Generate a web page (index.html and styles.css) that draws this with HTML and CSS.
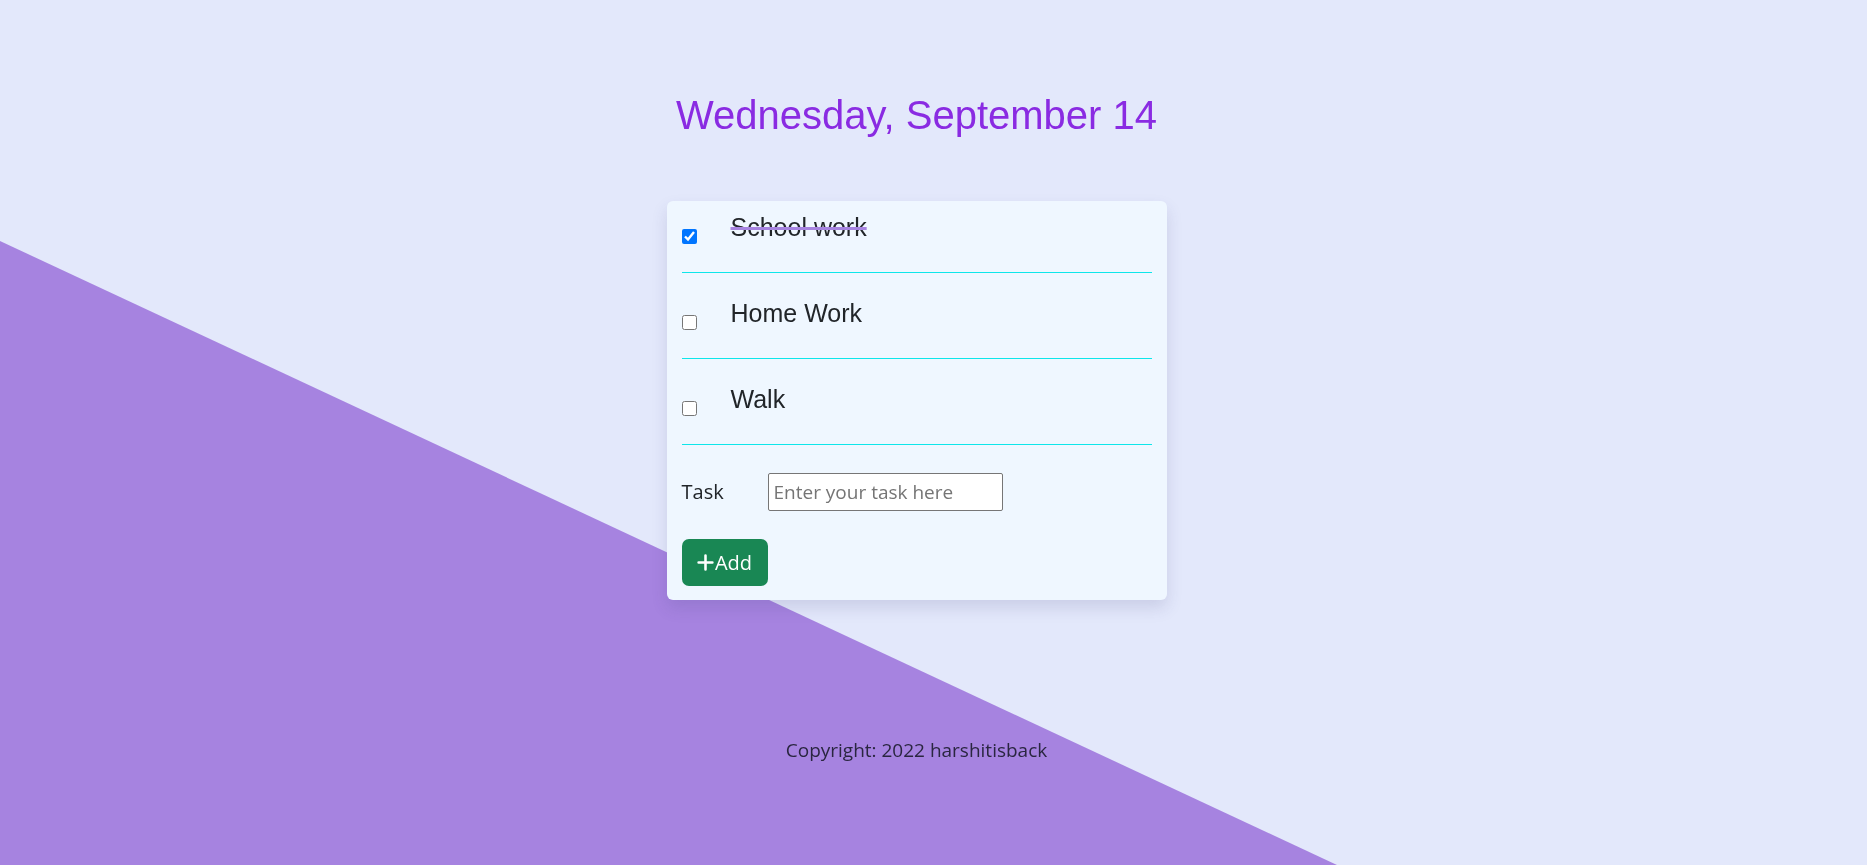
FILE: index.html
```html
<!DOCTYPE html>
<html lang="en">
<head>
<meta charset="utf-8">
<title>Todo</title>
<link rel="stylesheet" href="styles.css">
</head>
<body>
<div class="bg-shape"></div>
<main class="page">
  <h1 class="date">Wednesday, September 14</h1>
  <section class="card">
    <div class="task task-first">
      <input type="checkbox" class="check" checked>
      <span class="task-text done">School work</span>
    </div>
    <div class="task">
      <input type="checkbox" class="check">
      <span class="task-text">Home Work</span>
    </div>
    <div class="task">
      <input type="checkbox" class="check">
      <span class="task-text">Walk</span>
    </div>
    <div class="form-row">
      <label class="label" for="task">Task</label>
      <input id="task" class="task-input" type="text" placeholder="Enter your task here">
    </div>
    <button class="add-btn" type="button">
      <svg class="plus" viewBox="0 0 16 16" width="17" height="17" aria-hidden="true"><path d="M8 1.5v13M1.5 8h13" stroke="#fff" stroke-width="2.4" stroke-linecap="round" fill="none"/></svg><span>Add</span>
    </button>
  </section>
  <footer class="footer">Copyright: 2022 harshitisback</footer>
</main>
</body>
</html>
```

FILE: styles.css
```css
html, body {
  margin: 0;
  padding: 0;
}

body {
  min-height: 100vh;
  background: #e3e8fb;
  font-family: "Open Sans", "Noto Sans", sans-serif;
  color: #212529;
  position: relative;
  overflow: hidden;
}

.bg-shape {
  position: fixed;
  inset: 0;
  background: #a683e0;
  clip-path: polygon(0 241px, 1337px 100%, 0 100%);
  z-index: 0;
}

.page {
  position: relative;
  z-index: 1;
  display: flex;
  flex-direction: column;
  align-items: center;
  padding-right: 34px;
}

.date {
  margin: 93px 0 0;
  font-family: "Liberation Sans", Arial, sans-serif;
  font-weight: 400;
  font-size: 40px;
  line-height: 45px;
  color: #8a2be2;
}

.card {
  margin-top: 63px;
  width: 500px;
  box-sizing: border-box;
  padding: 0 15px 14px;
  background: #eff7ff;
  border-radius: 6px;
  box-shadow: 0 8px 16px rgba(60, 60, 120, 0.15);
  display: flex;
  flex-direction: column;
}

.task {
  height: 86px;
  box-sizing: border-box;
  padding-top: 26px;
  border-bottom: 1px solid #0ee6ea;
  display: flex;
  align-items: flex-start;
}

.task-first {
  height: 72px;
  padding-top: 12px;
}

.check {
  width: 15px;
  height: 15px;
  margin: 16px 34px 0 0;
  flex: none;
}

.task-text {
  font-family: "Liberation Sans", Arial, sans-serif;
  font-size: 25px;
  line-height: 29px;
  color: #212529;
}

.done {
  text-decoration: line-through;
  text-decoration-color: #a683e0;
  text-decoration-thickness: 3px;
}

.form-row {
  margin-top: 28px;
  display: flex;
  align-items: center;
}

.label {
  width: 86px;
  flex: none;
  font-size: 20px;
  line-height: 26px;
}

.task-input {
  width: 235px;
  height: 38px;
  box-sizing: border-box;
  border: 1px solid #767676;
  border-radius: 2px;
  padding: 0 5px;
  background: #fff;
  font-family: "Open Sans", "Noto Sans", sans-serif;
  font-size: 19px;
  color: #212529;
}

.task-input::placeholder {
  color: #757575;
}

.add-btn {
  margin-top: 28px;
  align-self: flex-start;
  width: 86px;
  height: 47px;
  border: none;
  border-radius: 7px;
  background: #198754;
  color: #fff;
  font-family: "Open Sans", "Noto Sans", sans-serif;
  font-size: 20px;
  display: flex;
  align-items: center;
  justify-content: center;
  gap: 1px;
  padding: 0;
}

.plus {
  display: block;
}

.footer {
  margin-top: 137px;
  font-size: 19px;
  line-height: 26px;
  color: #2a2640;
}
```
